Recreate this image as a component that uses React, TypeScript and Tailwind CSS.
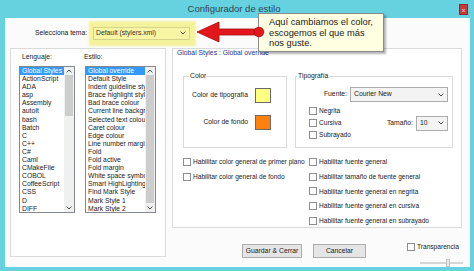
import React from 'react';

const languages = [
  'Global Styles', 'ActionScript', 'ADA', 'asp', 'Assembly', 'autoIt', 'bash', 'Batch', 'C',
  'C++', 'C#', 'Caml', 'CMakeFile', 'COBOL', 'CoffeeScript', 'CSS', 'D', 'DIFF',
];

const styles = [
  'Global override', 'Default Style', 'Indent guideline style', 'Brace highlight style',
  'Bad brace colour', 'Current line background colour', 'Selected text colour', 'Caret colour',
  'Edge colour', 'Line number margin', 'Fold', 'Fold active', 'Fold margin', 'White space symbol',
  'Smart HighLighting', 'Find Mark Style', 'Mark Style 1', 'Mark Style 2',
];

const Chevron = ({ up }: { up?: boolean }) => (
  <svg width="6" height="4" viewBox="0 0 6 4" className="block">
    <path
      d={up ? 'M0.6 3.4 L3 1 L5.4 3.4' : 'M0.6 0.6 L3 3 L5.4 0.6'}
      fill="none"
      stroke="#4a4a4a"
      strokeWidth="1"
    />
  </svg>
);

const ListBox = ({ items, widthClass, thumbClass }: { items: string[]; widthClass: string; thumbClass: string }) => (
  <div className={`flex h-[147px] border border-[#828790] bg-white ${widthClass}`}>
    <div className="flex-1 overflow-hidden">
      {items.map((item, i) => (
        <div
          key={item}
          className={`whitespace-nowrap pl-[2px] text-[6.8px] leading-[8.1px] ${
            i === 0 ? 'bg-[#3399ff] text-white' : 'text-[#1a1a1a]'
          }`}
        >
          {item}
        </div>
      ))}
    </div>
    <div className="flex w-[10px] flex-col bg-[#f0f0f0]">
      <div className="flex h-[8px] items-center justify-center">
        <Chevron up />
      </div>
      <div className={`mx-[1px] bg-[#cdcdcd] ${thumbClass}`} />
      <div className="flex-1" />
      <div className="flex h-[8px] items-center justify-center">
        <Chevron />
      </div>
    </div>
  </div>
);

const Combo = ({ value, widthClass }: { value: string; widthClass: string }) => (
  <div className={`flex h-[15px] items-center justify-between border border-[#acacac] bg-[#f3f3f3] pl-[3px] pr-[3px] text-[6.8px] text-[#1a1a1a] ${widthClass}`}>
    <span>{value}</span>
    <Chevron />
  </div>
);

const Check = ({ label }: { label: string }) => (
  <div className="flex items-center gap-[2px]">
    <div className="h-[8px] w-[8px] border border-[#8e8e8e] bg-white" />
    <span className="whitespace-nowrap text-[6.6px] text-[#1a1a1a]">{label}</span>
  </div>
);

const App: React.FC = () => {
  return (
    <div className="relative flex h-[271px] w-[474px] flex-col overflow-hidden bg-[#66d1df] font-['Liberation_Sans',Arial,sans-serif]">
      {/* Title bar */}
      <div className="flex h-[18px]">
        <div className="flex-1" />
        <div className="whitespace-nowrap text-[9.5px] leading-[18px] text-[#2a4656]">Configurador de estilo</div>
        <div className="flex flex-1 justify-end pr-[6px] pt-[4px]">
          <div className="flex h-[11px] w-[9px] items-center justify-center border border-[#9a2428] bg-[#c9383d] text-[6px] leading-none text-white">
            x
          </div>
        </div>
      </div>

      {/* Body */}
      <div className="mb-[4px] ml-[5px] mr-[4px] flex flex-1 flex-col bg-[#fbfbfb]">
        {/* Theme selector */}
        <div className="flex h-[30px] items-center pl-[30px]">
          <span className="w-[58px] whitespace-nowrap text-[6.8px] text-[#1a1a1a]">Selecciona tema:</span>
          <div className="relative h-[13px] w-[97px]">
            <div className="absolute -bottom-[6px] -left-[4px] -right-[6px] -top-[6px] bg-[#f4f29a] blur-[1px]" />
            <div className="relative flex h-full items-center justify-between border border-[#d6d38a] bg-[#f8f6a4] pl-[2px] pr-[3px] text-[6.8px] text-[#333]">
              <span>Default (stylers.xml)</span>
              <Chevron />
            </div>
          </div>
        </div>

        <div className="flex">
          {/* Left panel */}
          <div className="ml-[5px] h-[209px] w-[156px] border border-[#dadada] bg-white pl-[8px] pt-[4px]">
            <div className="flex h-[8px] text-[6.8px] leading-[8px] text-[#1a1a1a]">
              <span className="w-[65px] pl-[3px]">Lenguaje:</span>
              <span>Estilo:</span>
            </div>
            <div className="mt-[5px] flex gap-[10px]">
              <ListBox items={languages} widthClass="w-[56px]" thumbClass="h-[41px]" />
              <ListBox items={styles} widthClass="w-[71px]" thumbClass="h-[128px]" />
            </div>
          </div>

          {/* Right column */}
          <div className="ml-[6px] flex w-[290px] flex-col">
            <div className="flex h-[180px] flex-col border border-[#dadada] bg-white">
              <div className="h-[8px] pl-[4px] text-[6.8px] leading-[8px] text-[#27348b]">
                Global Styles : Global override
              </div>

              <div className="ml-[10px] mt-[19px] flex gap-[8px]">
                {/* Color group */}
                <div className="relative h-[72px] w-[104px] border border-[#dadada]">
                  <span className="absolute -top-[5px] left-[5px] bg-white px-[1px] text-[6.8px] leading-[8px] text-[#1a1a1a]">
                    Color
                  </span>
                  <div className="flex flex-col items-end gap-[12px] pr-[15px] pt-[11px]">
                    <div className="flex items-center gap-[7px]">
                      <span className="whitespace-nowrap text-[6.8px] text-[#1a1a1a]">Color de tipografía</span>
                      <div className="h-[15px] w-[16px] border border-[#6a6a6a] bg-[#ffff80]" />
                    </div>
                    <div className="flex items-center gap-[7px]">
                      <span className="whitespace-nowrap text-[6.8px] text-[#1a1a1a]">Color de fondo</span>
                      <div className="h-[15px] w-[16px] border border-[#6a6a6a] bg-[#ff7f0f]" />
                    </div>
                  </div>
                </div>

                {/* Typography group */}
                <div className="relative h-[72px] w-[158px] border border-[#dadada]">
                  <span className="absolute -top-[5px] left-[1px] bg-white px-[1px] text-[6.8px] leading-[8px] text-[#1a1a1a]">
                    Tipografía
                  </span>
                  <div className="flex flex-col pl-[13px] pr-[4px] pt-[10px]">
                    <div className="flex items-center justify-end gap-[3px]">
                      <span className="text-[6.8px] text-[#1a1a1a]">Fuente:</span>
                      <Combo value="Courier New" widthClass="w-[98px]" />
                    </div>
                    <div className="mt-[3px] flex items-center">
                      <div className="flex flex-col">
                        <div className="flex h-[12px] items-center"><Check label="Negrita" /></div>
                        <div className="flex h-[12px] items-center"><Check label="Cursiva" /></div>
                        <div className="flex h-[12px] items-center"><Check label="Subrayado" /></div>
                      </div>
                      <div className="ml-auto flex items-center gap-[3px]">
                        <span className="text-[6.8px] text-[#1a1a1a]">Tamaño:</span>
                        <Combo value="10" widthClass="w-[32px]" />
                      </div>
                    </div>
                  </div>
                </div>
              </div>

              {/* Enable options */}
              <div className="ml-[10px] mt-[7px] flex">
                <div className="flex w-[126px] flex-col">
                  <div className="flex h-[14.6px] items-center"><Check label="Habilitar color general de primer plano" /></div>
                  <div className="flex h-[14.6px] items-center"><Check label="Habilitar color general de fondo" /></div>
                </div>
                <div className="flex flex-col">
                  <div className="flex h-[14.6px] items-center"><Check label="Habilitar fuente general" /></div>
                  <div className="flex h-[14.6px] items-center"><Check label="Habilitar tamaño de fuente general" /></div>
                  <div className="flex h-[14.6px] items-center"><Check label="Habilitar fuente general en negrita" /></div>
                  <div className="flex h-[14.6px] items-center"><Check label="Habilitar fuente general en cursiva" /></div>
                  <div className="flex h-[14.6px] items-center"><Check label="Habilitar fuente general en subrayado" /></div>
                </div>
              </div>
            </div>

            {/* Buttons */}
            <div className="mt-[15px] flex">
              <div className="ml-[70px] mt-[1px] flex gap-[11px]">
                <div className="flex h-[14px] w-[60px] items-center justify-center border border-[#adadad] bg-[#e5e5e5] text-[6.8px] text-[#1a1a1a]">
                  Guardar &amp; Cerrar
                </div>
                <div className="flex h-[14px] w-[53px] items-center justify-center border border-[#adadad] bg-[#e5e5e5] text-[6.8px] text-[#1a1a1a]">
                  Cancelar
                </div>
              </div>
              <div className="ml-[41px] flex flex-col">
                <div className="flex h-[8px] items-center">
                  <Check label="Transparencia" />
                </div>
                <div className="relative ml-[13px] mt-[8px] h-[8px] w-[43px]">
                  <div className="absolute left-0 right-0 top-[3px] h-[2px] bg-[#d6d6d6]" />
                  <div className="absolute left-[26px] top-0 h-[8px] w-[4px] border border-[#c4c4c4] bg-[#e8e8e8]" />
                </div>
              </div>
            </div>
          </div>
        </div>
      </div>

      {/* Callout tooltip */}
      <div className="absolute left-[258px] top-[13px] h-[39px] w-[126px] border border-[#8a8a8a] bg-[#ffffe1] pl-[10px] pt-[3px] text-[9.3px] leading-[10.5px] text-[#1a1a1a] shadow-[2px_2px_2px_rgba(0,0,0,0.3)]">
        <div className="whitespace-nowrap">Aquí cambiamos el color,</div>
        <div className="whitespace-nowrap">escogemos el que más</div>
        <div className="whitespace-nowrap">nos guste.</div>
      </div>

      {/* Red arrow */}
      <svg className="absolute left-[190px] top-[18px]" width="76" height="30" viewBox="0 0 76 30">
        <path
          d="M7 14 L29 4 L29 11 L67 11 L67 17 L29 17 L29 24 Z"
          fill="#e3161b"
          stroke="#a10c10"
          strokeWidth="0.8"
          strokeLinejoin="round"
        />
        <circle cx="69" cy="14" r="4.8" fill="#e3161b" stroke="#a10c10" strokeWidth="0.8" />
      </svg>
    </div>
  );
};

export default App;
